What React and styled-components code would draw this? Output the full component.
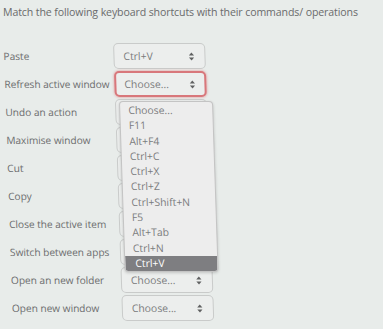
import React from "react";
import styled, { createGlobalStyle } from "styled-components";

const Global = createGlobalStyle`
  html, body { margin: 0; padding: 0; }
  body {
    background: #e8ecea;
    font-family: "Open Sans", "Noto Sans", sans-serif;
    color: #6e6f70;
    width: 383px;
    height: 329px;
    overflow: hidden;
  }
`;

const Page = styled.div`
  padding: 5px 0 0 3px;
`;

const Title = styled.div`
  font-size: 10.6px;
  line-height: 14px;
  letter-spacing: -0.12px;
  color: #6a6b6c;
  white-space: nowrap;
`;

const Rows = styled.div`
  margin-top: 23px;
  display: flex;
  flex-direction: column;
  transform: skewX(1.9deg);
  transform-origin: 0 0;
`;

const Row = styled.div`
  display: grid;
  grid-template-columns: 110px 92px;
  align-items: center;
  height: 28px;
`;

const Label = styled.div`
  font-size: 10.2px;
  letter-spacing: -0.05px;
  white-space: nowrap;
  color: #6c6d6e;
`;

const SelectBox = styled.div`
  position: relative;
  box-sizing: border-box;
  height: 26px;
  border: ${(p) => (p.$invalid ? "2px solid #d8777b" : "1px solid #c9cbca")};
  box-shadow: ${(p) => (p.$invalid ? "0 0 2px 1px rgba(225,140,140,0.45)" : "none")};
  border-radius: 5px;
  background: #eceeed;
  display: flex;
  align-items: center;
  justify-content: space-between;
  padding: 0 ${(p) => (p.$invalid ? 9 : 10)}px 0 ${(p) => (p.$invalid ? 8 : 9)}px;
  font-size: 10.4px;
  color: #7a7b7c;
`;

const Arrows = () => (
  <svg width="6" height="9" viewBox="0 0 6 9">
    <path d="M3 0.5 L5.6 3.6 H0.4 Z" fill="#5f6061" />
    <path d="M3 8.5 L5.6 5.4 H0.4 Z" fill="#5f6061" />
  </svg>
);

const List = styled.div`
  position: absolute;
  top: 28px;
  left: 2px;
  width: 94px;
  box-sizing: border-box;
  background: #ededed;
  border: 1px solid #c4c4c4;
  border-radius: 4px;
  box-shadow: 0 1px 3px rgba(0, 0, 0, 0.18);
  padding: 1px 0 0 0;
  overflow: hidden;
  z-index: 5;
`;

const Option = styled.div`
  height: 15.3px;
  line-height: 15.3px;
  padding-left: ${(p) => (p.$active ? 10 : 8)}px;
  font-size: 10.4px;
  color: ${(p) => (p.$active ? "#ffffff" : "#7b7c7d")};
  background: ${(p) => (p.$active ? "#7e7e81" : "transparent")};
`;

const rows = [
  { label: "Paste", value: "Ctrl+V" },
  { label: "Refresh active window", value: "Choose...", invalid: true, open: true },
  { label: "Undo an action", value: "Choose..." },
  { label: "Maximise window", value: "Choose..." },
  { label: "Cut", value: "Choose..." },
  { label: "Copy", value: "Choose..." },
  { label: "Close the active item", value: "Choose..." },
  { label: "Switch between apps", value: "Choose..." },
  { label: "Open an new folder", value: "Choose..." },
  { label: "Open new window", value: "Choose..." },
];

const options = [
  "Choose...",
  "F11",
  "Alt+F4",
  "Ctrl+C",
  "Ctrl+X",
  "Ctrl+Z",
  "Ctrl+Shift+N",
  "F5",
  "Alt+Tab",
  "Ctrl+N",
  "Ctrl+V",
];

export default function App() {
  return (
    <>
      <Global />
      <Page>
        <Title>Match the following keyboard shortcuts with their commands/ operations</Title>
        <Rows>
          {rows.map((r, i) => (
            <Row key={i}>
              <Label>{r.label}</Label>
              <SelectBox $invalid={r.invalid}>
                <span>{r.value}</span>
                <Arrows />
                {r.open && (
                  <List>
                    {options.map((o) => (
                      <Option key={o} $active={o === "Ctrl+V"}>
                        {o}
                      </Option>
                    ))}
                  </List>
                )}
              </SelectBox>
            </Row>
          ))}
        </Rows>
      </Page>
    </>
  );
}
